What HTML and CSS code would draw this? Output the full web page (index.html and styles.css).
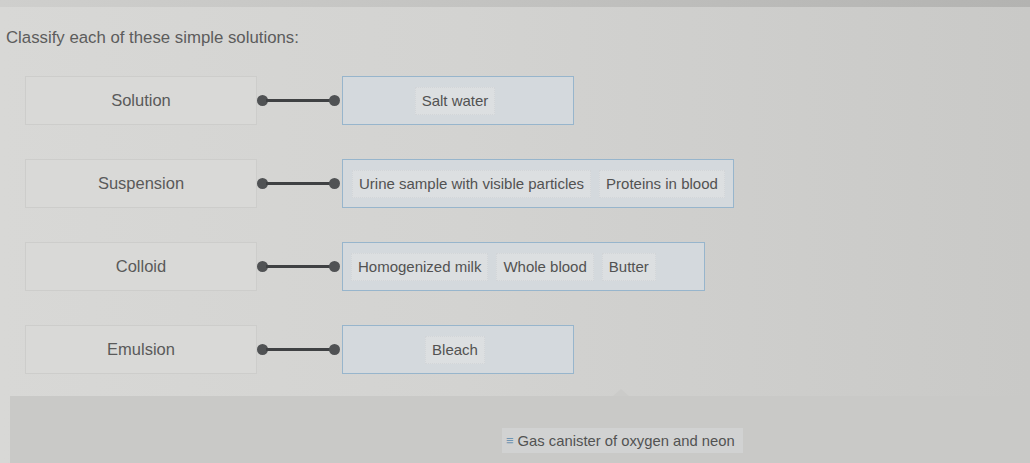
FILE: index.html
```html
<!DOCTYPE html>
<html>
<head>
<meta charset="utf-8">
<link rel="stylesheet" href="styles.css">
</head>
<body>
<div class="topbar"></div>
<main class="page">
  <h1 class="title">Classify each of these simple solutions:</h1>
  <div class="rows">
    <div class="row">
      <div class="label">Solution</div>
      <div class="connector"><span class="dot"></span><span class="line"></span><span class="dot"></span></div>
      <div class="target target-sm centered"><span class="chip">Salt water</span></div>
    </div>
    <div class="row">
      <div class="label">Suspension</div>
      <div class="connector"><span class="dot"></span><span class="line"></span><span class="dot"></span></div>
      <div class="target target-lg"><span class="chip">Urine sample with visible particles</span><span class="chip">Proteins in blood</span></div>
    </div>
    <div class="row">
      <div class="label">Colloid</div>
      <div class="connector"><span class="dot"></span><span class="line"></span><span class="dot"></span></div>
      <div class="target target-md"><span class="chip">Homogenized milk</span><span class="chip">Whole blood</span><span class="chip">Butter</span></div>
    </div>
    <div class="row">
      <div class="label">Emulsion</div>
      <div class="connector"><span class="dot"></span><span class="line"></span><span class="dot"></span></div>
      <div class="target target-sm centered"><span class="chip">Bleach</span></div>
    </div>
  </div>
  <div class="pool">
    <span class="notch"></span>
    <span class="chip pool-chip"><span class="grip">&#8801;</span> Gas canister of oxygen and neon</span>
  </div>
</main>
</body>
</html>
```
FILE: styles.css
```css
* { box-sizing: border-box; }
html, body { margin: 0; padding: 0; }
body {
  width: 1030px;
  height: 463px;
  overflow: hidden;
  font-family: "Liberation Sans", Arial, sans-serif;
  color: #555;
  background: linear-gradient(90deg, #d8d8d6 0%, #d3d3d1 45%, #c9c9c7 100%);
}
.topbar {
  height: 7px;
  background: linear-gradient(90deg, #cfcfcd 0%, #c2c2c0 50%, #b3b3b1 100%);
}
.page {
  display: flex;
  flex-direction: column;
}
.title {
  margin: 21px 0 0 6px;
  font-size: 16.8px;
  font-weight: normal;
  color: #5c5c5c;
  line-height: 20px;
}
.rows {
  display: flex;
  flex-direction: column;
  gap: 34px;
  margin: 28px 0 0 25px;
}
.row {
  display: flex;
  align-items: center;
  height: 49px;
}
.label {
  width: 232px;
  height: 49px;
  display: flex;
  align-items: center;
  justify-content: center;
  font-size: 16.5px;
  color: #5a5a5a;
  background: #d9d9d7;
  border: 1px solid #cdcdcb;
}
.connector {
  width: 85px;
  display: flex;
  align-items: center;
  padding: 0 2px 0 0;
}
.dot {
  width: 11px;
  height: 11px;
  border-radius: 50%;
  background: #505254;
  flex: none;
}
.line {
  flex: 1;
  height: 3px;
  background: #3f4143;
  margin: 0 -2px;
}
.target {
  height: 49px;
  display: flex;
  align-items: center;
  gap: 8px;
  padding: 0 10px;
  background: #d4d9dd;
  border: 1px solid #97b5cc;
}
.target.centered { justify-content: center; }
.target-sm { width: 232px; }
.target-md { width: 363px; padding-left: 8px; }
.target-lg { width: 392px; padding-left: 9px; }
.chip {
  display: inline-flex;
  align-items: center;
  height: 28px;
  padding: 0 6px;
  font-size: 15px;
  color: #525252;
  background: #dcdfe1;
  border: 1px dotted #d2d5d8;
  white-space: nowrap;
}
.target-sm .chip { margin-right: 6px; }
.pool {
  position: relative;
  margin: 22px 0 0 10px;
  height: 68px;
  background: #c9c9c7;
  display: flex;
  align-items: flex-end;
  padding: 0 0 11px 492px;
}
.notch {
  position: absolute;
  top: -7px;
  left: 603px;
  width: 0;
  height: 0;
  border-left: 8px solid transparent;
  border-right: 8px solid transparent;
  border-bottom: 7px solid #cbcbc9;
}
.pool-chip {
  height: 25px;
  background: #d1d2d2;
  border: none;
  padding: 0 8px 0 4px;
  font-size: 14.8px;
}
.grip {
  color: #6f95b3;
  font-size: 13px;
  margin-right: 4px;
}
```
